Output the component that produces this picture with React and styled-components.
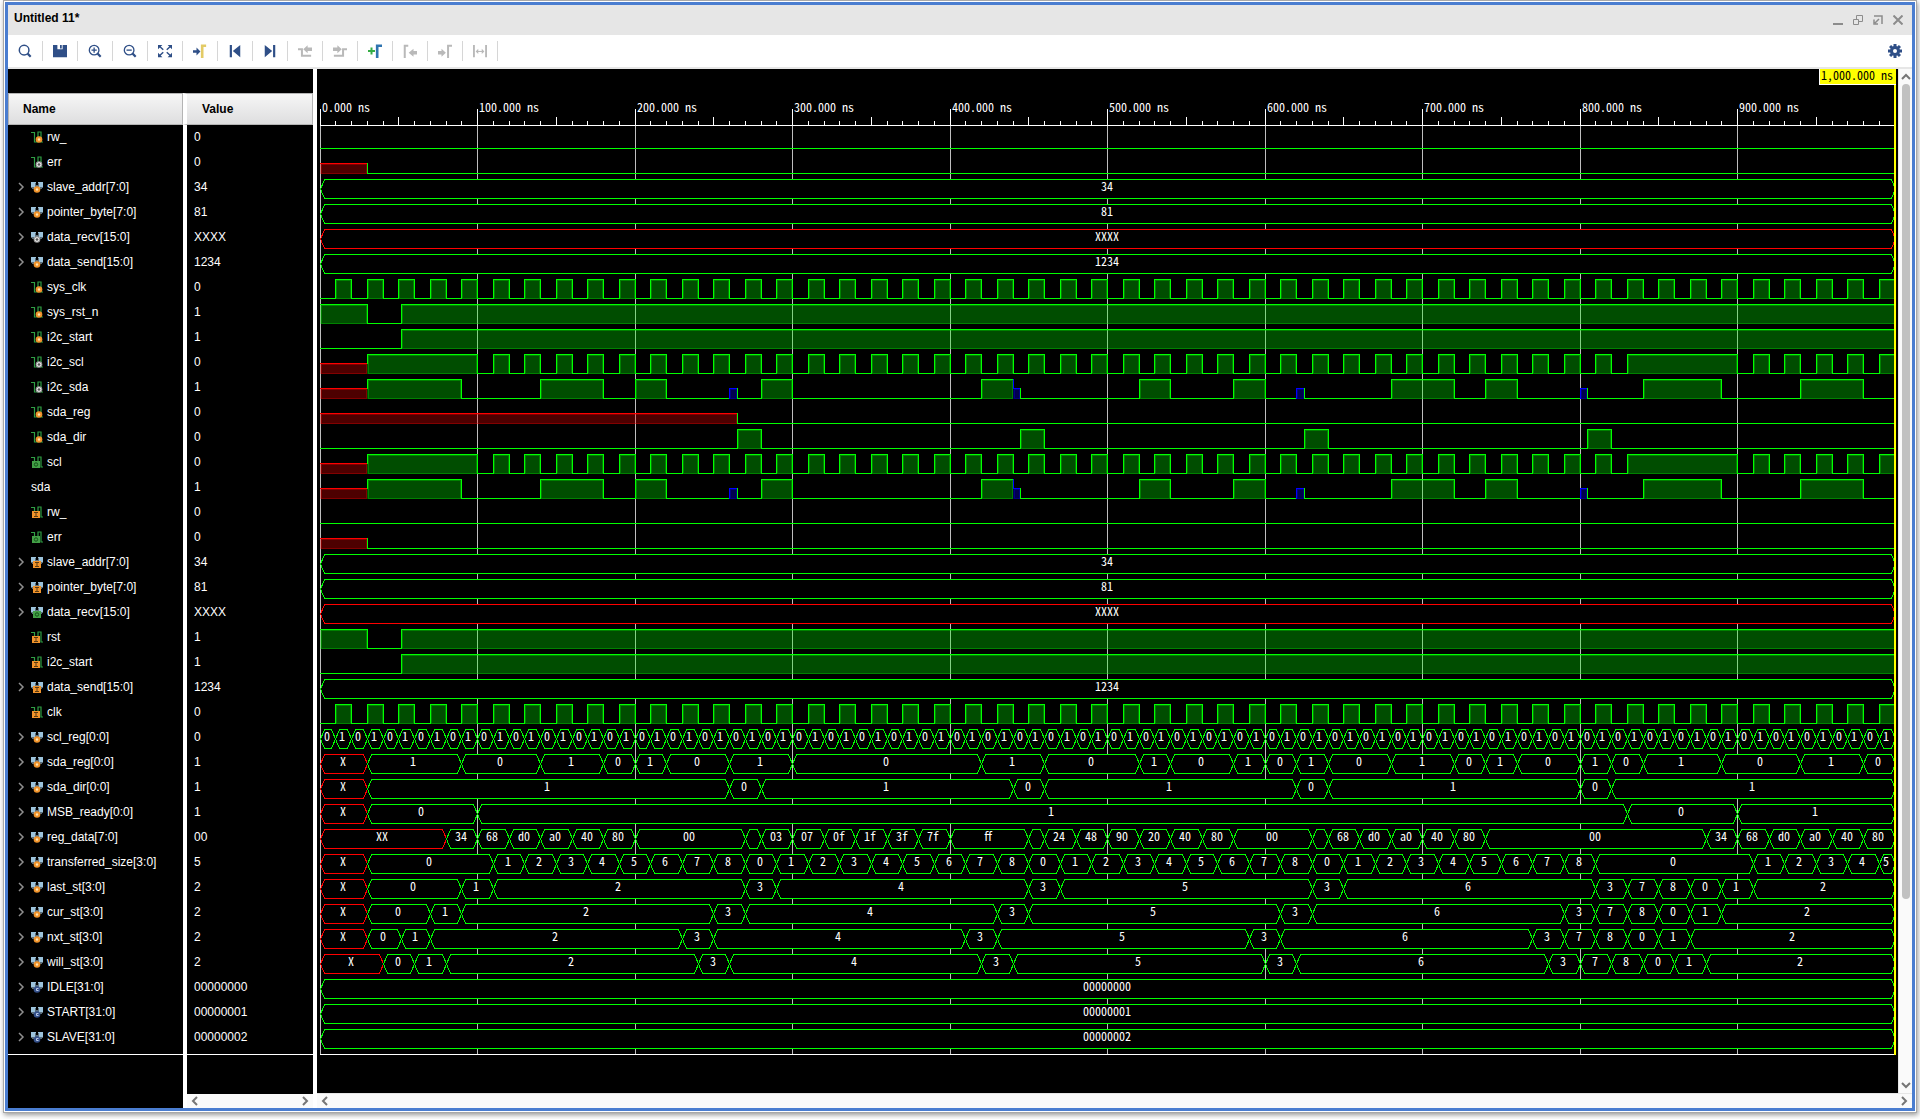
import React, { useLayoutEffect, useRef, useState } from 'react';
import styled, { createGlobalStyle } from 'styled-components';

const ROW = 25; // height of one signal row
const RULER = 56; // strip above the first row
const END = 1000; // simulated time in ns

const COLORS = {
    green: '#00ff00',
    red: '#ff0000',
    blue: '#0000ff',
    navy: '#2f4f87',
    grey: '#b9b9b9',
};

// levels: [end, level] pairs, level is 0, 1, 'x' or 'z'
const clock = [];
for (let t = 0; t < END; t += 20) {
    clock.push([t + 10, 0], [t + 20, 1]);
}

const scl = [
    [30, 'x'],
    [100, 1],
    ...clock.filter(([end]) => end > 100 && end <= 820),
    [830, 0],
    [900, 1],
    ...clock.filter(([end]) => end > 900),
];

const sda = [
    [30, 'x'], [90, 1], [140, 0], [180, 1], [200, 0], [220, 1], [260, 0], [265, 'z'],
    [280, 0], [300, 1], [420, 0], [440, 1], [445, 'z'], [520, 0], [540, 1], [580, 0],
    [600, 1], [620, 0], [625, 'z'], [680, 0], [720, 1], [740, 0], [760, 1], [800, 0],
    [805, 'z'], [840, 0], [890, 1], [940, 0], [980, 1], [1000, 0],
];

const sdaDir = [
    [265, 0], [280, 1], [445, 0], [460, 1], [625, 0], [640, 1], [805, 0], [820, 1], [1000, 0],
];

const errLevels = [[30, 'x'], [1000, 0]];
const resetLevels = [[30, 1], [52, 0], [1000, 1]];
const startLevels = [[52, 0], [1000, 1]];

// bus cells: [end, label]
const sclReg = [];
for (let t = 0; t < END; t += 10) {
    sclReg.push([t + 10, (t / 10) % 2 ? '1' : '0']);
}

const sdaReg = [
    [30, 'X'], [90, '1'], [140, '0'], [180, '1'], [200, '0'], [220, '1'], [260, '0'],
    [300, '1'], [420, '0'], [460, '1'], [520, '0'], [540, '1'], [580, '0'], [600, '1'],
    [620, '0'], [640, '1'], [680, '0'], [720, '1'], [740, '0'], [760, '1'], [800, '0'],
    [820, '1'], [840, '0'], [890, '1'], [940, '0'], [980, '1'], [1000, '0'],
];

const sdaDirReg = [
    [30, 'X'], [260, '1'], [280, '0'], [440, '1'], [460, '0'], [620, '1'], [640, '0'],
    [800, '1'], [820, '0'], [1000, '1'],
];

const regData = [
    [80, 'XX'], [100, '34'], [120, '68'], [140, 'd0'], [160, 'a0'], [180, '40'], [200, '80'],
    [270, '00'], [280, ''], [300, '03'], [320, '07'], [340, '0f'], [360, '1f'], [380, '3f'],
    [400, '7f'], [450, 'ff'], [460, ''], [480, '24'], [500, '48'], [520, '90'], [540, '20'],
    [560, '40'], [580, '80'], [630, '00'], [640, ''], [660, '68'], [680, 'd0'], [700, 'a0'],
    [720, '40'], [740, '80'], [880, '00'], [900, '34'], [920, '68'], [940, 'd0'], [960, 'a0'],
    [980, '40'], [1000, '80'],
];

const count = (start, from, to) => {
    const cells = [];
    for (let n = from; n <= to; n++) {
        cells.push([start + (n - from + 1) * 20, String(n)]);
    }
    return cells;
};

const transferred = [
    [30, 'X'], [110, '0'], ...count(110, 1, 8), ...count(270, 0, 8), ...count(450, 0, 8),
    ...count(630, 0, 8), [910, '0'], ...count(910, 1, 4), [1000, '5'],
];

// the four state registers run the same sequence, each a bit earlier or later
const states = (head, t) => [
    ...head,
    [t, '2'], [t + 20, '3'], [t + 180, '4'], [t + 200, '3'], [t + 360, '5'], [t + 380, '3'],
    [t + 540, '6'], [t + 560, '3'], [t + 580, '7'], [t + 600, '8'], [t + 620, '0'],
    [t + 640, '1'], [1000, '2'],
];

const SIGNALS = [
    { name: 'rw_', value: '0', icon: 'reg', levels: [[1000, 0]] },
    { name: 'err', value: '0', icon: 'wire', levels: errLevels },
    { name: 'slave_addr[7:0]', value: '34', icon: 'reg', bus: [[1000, '34']] },
    { name: 'pointer_byte[7:0]', value: '81', icon: 'reg', bus: [[1000, '81']] },
    { name: 'data_recv[15:0]', value: 'XXXX', icon: 'wire', bus: [[1000, 'XXXX']] },
    { name: 'data_send[15:0]', value: '1234', icon: 'reg', bus: [[1000, '1234']] },
    { name: 'sys_clk', value: '0', icon: 'reg', levels: clock },
    { name: 'sys_rst_n', value: '1', icon: 'reg', levels: resetLevels },
    { name: 'i2c_start', value: '1', icon: 'reg', levels: startLevels },
    { name: 'i2c_scl', value: '0', icon: 'wire', levels: scl },
    { name: 'i2c_sda', value: '1', icon: 'wire', levels: sda },
    { name: 'sda_reg', value: '0', icon: 'reg', levels: [[265, 'x'], [1000, 0]] },
    { name: 'sda_dir', value: '0', icon: 'reg', levels: sdaDir },
    { name: 'scl', value: '0', icon: 'out', levels: scl },
    { name: 'sda', value: '1', levels: sda },
    { name: 'rw_', value: '0', icon: 'in', levels: [[1000, 0]] },
    { name: 'err', value: '0', icon: 'out', levels: errLevels },
    { name: 'slave_addr[7:0]', value: '34', icon: 'in', bus: [[1000, '34']] },
    { name: 'pointer_byte[7:0]', value: '81', icon: 'in', bus: [[1000, '81']] },
    { name: 'data_recv[15:0]', value: 'XXXX', icon: 'out', bus: [[1000, 'XXXX']] },
    { name: 'rst', value: '1', icon: 'in', levels: resetLevels },
    { name: 'i2c_start', value: '1', icon: 'in', levels: startLevels },
    { name: 'data_send[15:0]', value: '1234', icon: 'in', bus: [[1000, '1234']] },
    { name: 'clk', value: '0', icon: 'in', levels: clock },
    { name: 'scl_reg[0:0]', value: '0', icon: 'reg', bus: sclReg },
    { name: 'sda_reg[0:0]', value: '1', icon: 'reg', bus: sdaReg },
    { name: 'sda_dir[0:0]', value: '1', icon: 'reg', bus: sdaDirReg },
    {
        name: 'MSB_ready[0:0]',
        value: '1',
        icon: 'reg',
        bus: [[30, 'X'], [100, '0'], [830, '1'], [900, '0'], [1000, '1']],
    },
    { name: 'reg_data[7:0]', value: '00', icon: 'reg', bus: regData },
    { name: 'transferred_size[3:0]', value: '5', icon: 'reg', bus: transferred },
    {
        name: 'last_st[3:0]',
        value: '2',
        icon: 'reg',
        bus: states([[30, 'X'], [90, '0'], [110, '1']], 270),
    },
    {
        name: 'cur_st[3:0]',
        value: '2',
        icon: 'reg',
        bus: states([[30, 'X'], [70, '0'], [90, '1']], 250),
    },
    {
        name: 'nxt_st[3:0]',
        value: '2',
        icon: 'reg',
        bus: states([[30, 'X'], [52, '0'], [70, '1']], 230),
    },
    {
        name: 'will_st[3:0]',
        value: '2',
        icon: 'reg',
        bus: states([[40, 'X'], [60, '0'], [80, '1']], 240),
    },
    { name: 'IDLE[31:0]', value: '00000000', icon: 'const', bus: [[1000, '00000000']] },
    { name: 'START[31:0]', value: '00000001', icon: 'const', bus: [[1000, '00000001']] },
    { name: 'SLAVE[31:0]', value: '00000002', icon: 'const', bus: [[1000, '00000002']] },
];

const BADGES = {
    reg: { fill: '#f0932b', mark: '#ffe2b0', round: true },
    wire: { fill: '#9a9a9a', mark: '#f4f4f4', round: true },
    const: { fill: '#34508a', mark: '#b9c8e6', round: true },
    in: { fill: '#f0932b', mark: '#5b3a10' },
    out: { fill: '#43a047', mark: '#155218' },
};

function SignalIcon({ kind, bus }) {
    const badge = BADGES[kind];
    const cx = bus ? 6 : badge.round ? 8 : 5;

    return (
        <svg width="12" height="12" viewBox="0 0 12 12" aria-hidden="true">
            {bus ? (
                <>
                    <path d="M0 1h5v7H2V7H0zM12 1H7v7h3V7h2z" fill="#9cc3dc" />
                    <path d="M0 6h3v2H1V7H0zM12 6H9v2h2V7h1zM4 2h1v2h2V2h1v4H4z" fill="#5c6f7c" />
                </>
            ) : (
                <path
                    d="M0 1.500h3.500v9.500H7V1h3v10h2"
                    fill="none"
                    stroke="#2f9e44"
                    strokeWidth="1.200"
                />
            )}
            {badge.round ? (
                <>
                    <circle cx={cx} cy="8.500" r="3.300" fill={badge.fill} />
                    {kind === 'reg' && <circle cx={cx} cy="8.500" r="1.200" fill={badge.mark} />}
                    {kind === 'wire' && (
                        <circle cx={cx} cy="8.500" r="1.800" fill="#555" stroke={badge.mark} />
                    )}
                    {kind === 'const' && (
                        <path d="M7.500 7.500H5.500v2h2" fill="none" stroke={badge.mark} />
                    )}
                </>
            ) : (
                <>
                    <rect x={cx - 4} y="5" width="8" height="7" fill={badge.fill} />
                    {kind === 'in' ? (
                        <path
                            d={`M${cx - 2} 6.500h4M${cx} 6v5M${cx - 2} 10.500h4`}
                            stroke={badge.mark}
                        />
                    ) : (
                        <circle cx={cx} cy="8.500" r="1.700" fill="none" stroke={badge.mark} />
                    )}
                </>
            )}
        </svg>
    );
}

const { navy, grey } = COLORS;

const TOOLS = [
    {
        label: 'Search',
        art: (
            <>
                <circle cx="7" cy="7" r="5.500" fill="none" stroke={navy} strokeWidth="1.700" />
                <path d="M11 11l3.500 3.500" stroke={navy} strokeWidth="2.500" />
            </>
        ),
    },
    { label: 'Save', art: <path d="M0 1h5v5h6V1h5v14H0zM8 1h2v4H8z" fill={navy} /> },
    {
        label: 'Zoom in',
        art: (
            <>
                <circle cx="7" cy="7" r="5.500" fill="none" stroke={navy} strokeWidth="1.500" />
                <path d="M11 11l3.500 3.500" stroke={navy} strokeWidth="2.500" />
                <path d="M4 7h6M7 4v6" stroke={navy} strokeWidth="1.500" />
            </>
        ),
    },
    {
        label: 'Zoom out',
        art: (
            <>
                <circle cx="7" cy="7" r="5.500" fill="none" stroke={navy} strokeWidth="1.500" />
                <path d="M11 11l3.500 3.500" stroke={navy} strokeWidth="2.500" />
                <path d="M4 7h6" stroke={navy} strokeWidth="1.500" />
            </>
        ),
    },
    {
        label: 'Zoom fit',
        art: (
            <>
                <path d="M0 1h5L0 6zM16 1v5l-5-5zM0 15v-5l5 5zM16 15h-5l5-5z" fill={navy} />
                <path
                    d="M1 2l5 4.500M15 2l-5 4.500M1 14l5-4.500M15 14l-5-4.500"
                    stroke={navy}
                    strokeWidth="1.700"
                />
            </>
        ),
    },
    {
        label: 'Go to cursor',
        art: (
            <>
                <path d="M0 7h4V4l4.500 4.500L4 13v-3H0z" fill={navy} />
                <path d="M10.500 16V2H15" fill="none" stroke="#e3cb66" strokeWidth="3" />
            </>
        ),
    },
    {
        label: 'Go to time 0',
        art: <path d="M2 1h2.500v14H2zM14 1v14L5.500 8z" fill={navy} />,
    },
    {
        label: 'Go to last time',
        art: <path d="M11.500 1H14v14h-2.500zM2 1v14l8.500-7z" fill={navy} />,
    },
    {
        label: 'Previous transition',
        disabled: true,
        art: (
            <>
                <path d="M0 6h4.500v7.500H15" fill="none" stroke={grey} strokeWidth="2.300" />
                <path d="M16 4v4h-5v2.500L6 6l5-4.500V4z" fill={grey} />
            </>
        ),
    },
    {
        label: 'Next transition',
        disabled: true,
        art: (
            <>
                <path d="M16 6h-4.500v7.500H1" fill="none" stroke={grey} strokeWidth="2.300" />
                <path d="M0 4v4h5v2.500L10 6 5 1.500V4z" fill={grey} />
            </>
        ),
    },
    {
        label: 'Add marker',
        art: (
            <>
                <path d="M0 8h8M4 4v8" stroke="#35ad45" strokeWidth="2.300" />
                <path d="M10.500 16V2H16" fill="none" stroke="#2f74b0" strokeWidth="3" />
            </>
        ),
    },
    {
        label: 'Previous marker',
        disabled: true,
        art: (
            <>
                <path d="M2 16V2h4" fill="none" stroke={grey} strokeWidth="2.300" />
                <path d="M16 8v4h-4v2.500L6.500 10 12 5.500V8z" fill={grey} />
            </>
        ),
    },
    {
        label: 'Next marker',
        disabled: true,
        art: (
            <>
                <path d="M0 8v4h4v2.500L9 10 4 5.500V8z" fill={grey} />
                <path d="M11.500 16V2H16" fill="none" stroke={grey} strokeWidth="2.300" />
            </>
        ),
    },
    {
        label: 'Swap cursors',
        disabled: true,
        art: (
            <>
                <path d="M1 1v14M15 1v14" stroke={grey} strokeWidth="2.300" />
                <path d="M4 8.500h8" stroke={grey} strokeWidth="1.200" />
                <path d="M3 8.500L6 5.500v6zM13 8.500l-3-3v6z" fill={grey} />
            </>
        ),
    },
];

const WINDOW_TOOLS = [
    { label: 'Minimize', art: <path d="M0 9h10" strokeWidth="2" /> },
    { label: 'Restore', art: <path d="M0.500 4.500h5v5h-5zM3.500 4V0.500h6v6H6" /> },
    { label: 'Float', art: <path d="M1 1h8v8M2 8l4-4M1 4.500V9h4" strokeWidth="1.500" /> },
    { label: 'Close', art: <path d="M0.500 0.500l9 9M9.500 0.500l-9 9" strokeWidth="2" /> },
];

const ARROWS = {
    up: 'M2 8l4-4 4 4',
    down: 'M2 4l4 4 4-4',
    left: 'M8 2L4 6l4 4',
    right: 'M4 2l4 4-4 4',
};

function Arrow({ dir }) {
    return (
        <ArrowButton type="button" aria-label={`Scroll ${dir}`}>
            <svg width="12" height="12" viewBox="0 0 12 12" fill="none">
                <path d={ARROWS[dir]} stroke="#757575" strokeWidth="2" />
            </svg>
        </ArrowButton>
    );
}

// One-bit signal. Baseline at 23, high level at 4, unknown and floating at 13.
function Levels({ levels, at }) {
    const tops = { 0: 23, 1: 4, x: 13, z: 13 };
    const tones = { 0: COLORS.green, 1: COLORS.green, x: COLORS.red, z: COLORS.blue };

    return levels.map(([end, level], i) => {
        const start = i ? levels[i - 1][0] : 0;
        const before = i ? tops[levels[i - 1][1]] : null;
        const x = at(start);
        const w = at(end) - x;
        const top = tops[level];
        const tone = tones[level];

        return (
            <g key={end} fill={tone}>
                {level !== 0 && (
                    <>
                        <rect x={x} y={top} width={w} height={24 - top} fillOpacity="0.3" />
                        <path
                            d={`M${x + 1.5} ${top + 1.5}H${x + w - 0.5}V23.500H${x + 1.5}z`}
                            fill="none"
                            stroke={tone}
                            strokeOpacity="0.3"
                        />
                    </>
                )}
                <rect x={x} y={top} width={w + 1} height="1" />
                {before !== null && (
                    <rect
                        x={x}
                        y={Math.min(before, top)}
                        width="1"
                        height={Math.abs(before - top) + 1}
                    />
                )}
            </g>
        );
    });
}

function Bus({ cells, at }) {
    return cells.map(([end, label], i) => {
        const a = at(i ? cells[i - 1][0] : 0) + 0.5;
        const b = at(end) + 0.5;
        const unknown = label.startsWith('X');

        return (
            <g key={end}>
                <polygon
                    points={`${a},14 ${a + 4},4.5 ${b - 4},4.5 ${b},14 ${b - 4},23.5 ${a + 4},23.5`}
                    fill="#000"
                    stroke={unknown ? COLORS.red : COLORS.green}
                />
                <WaveText x={Math.floor((a + b) / 2) - 1} y="16" textAnchor="middle">
                    {label}
                </WaveText>
            </g>
        );
    });
}

function Waveform() {
    const box = useRef(null);
    const [width, setWidth] = useState(0);

    useLayoutEffect(() => {
        const measure = () => setWidth(box.current.clientWidth);
        measure();
        const observer = new ResizeObserver(measure);
        observer.observe(box.current);
        return () => observer.disconnect();
    }, []);

    const at = (t) => 3 + Math.floor((t * Math.max(width - 6, 0)) / END);
    const bottom = RULER + SIGNALS.length * ROW + 4;
    const ticks = [];
    for (let t = 0; t < END; t += 10) {
        ticks.push(t);
    }

    return (
        <Canvas ref={box}>
            {width > 0 && (
                <svg
                    width={width}
                    height={bottom + 1}
                    overflow="visible"
                    role="img"
                    aria-label="Waveforms"
                >
                    <g fill="#fff" shapeRendering="crispEdges">
                        {ticks.map((t) => {
                            const h = t % 100 === 0 ? 16 : t % 50 === 0 ? 8 : 4;
                            return <rect key={t} x={at(t)} y={RULER - h} width="1" height={h} />;
                        })}
                        <rect x={at(0)} y={RULER} width={at(END) - at(0)} height="1" />
                        <rect x={at(0)} y={bottom} width={at(END) - at(0)} height="1" />
                    </g>
                    {ticks
                        .filter((t) => t % 100 === 0)
                        .map((t) => (
                            <g key={t}>
                                <rect
                                    x={at(t)}
                                    y={RULER + 1}
                                    width="1"
                                    height={bottom - RULER - 1}
                                    fill="#bebebe"
                                />
                                <WaveText x={at(t) + 2} y="43">
                                    {t}.000 ns
                                </WaveText>
                            </g>
                        ))}
                    {SIGNALS.map((signal, i) => (
                        <g
                            key={i}
                            transform={`translate(0 ${RULER + i * ROW})`}
                            shapeRendering="crispEdges"
                        >
                            {signal.bus ? (
                                <Bus cells={signal.bus} at={at} />
                            ) : (
                                <Levels levels={signal.levels} at={at} />
                            )}
                        </g>
                    ))}
                    <rect x={at(END) - 1} y="16" width="2" height={bottom - 15} fill="#ff0" />
                    <rect x={at(END) - 76} y="0" width="77" height="16" fill="#fff" />
                    <rect x={at(END) - 75} y="0" width="76" height="15" fill="#ff0" />
                    <CursorText x={at(END) - 74} y="11">
                        1,000.000 ns
                    </CursorText>
                </svg>
            )}
        </Canvas>
    );
}

function App() {
    return (
        <>
            <GlobalStyle />
            <Frame>
                <Panel>
                    <TitleBar>
                        <Title>Untitled 11*</Title>
                        <WindowTools>
                            {WINDOW_TOOLS.map((tool) => (
                                <WindowButton key={tool.label} type="button" aria-label={tool.label}>
                                    <svg width="10" height="10" viewBox="0 0 10 10" fill="none" stroke="#8c8c8c">
                                        {tool.art}
                                    </svg>
                                </WindowButton>
                            ))}
                        </WindowTools>
                    </TitleBar>
                    <Toolbar>
                        {TOOLS.map((tool) => (
                            <ToolSlot key={tool.label}>
                                <ToolButton type="button" aria-label={tool.label} disabled={tool.disabled}>
                                    <svg width="14" height="14" viewBox="0 0 16 16">
                                        {tool.art}
                                    </svg>
                                </ToolButton>
                            </ToolSlot>
                        ))}
                        <Spacer />
                        <ToolButton type="button" aria-label="Settings">
                            <svg width="14" height="14" viewBox="0 0 14 14">
                                {[0, 45, 90, 135].map((turn) => (
                                    <rect
                                        key={turn}
                                        x="5.500"
                                        width="3"
                                        height="14"
                                        fill={navy}
                                        transform={`rotate(${turn} 7 7)`}
                                    />
                                ))}
                                <circle cx="7" cy="7" r="5" fill={navy} />
                                <circle cx="7" cy="7" r="2" fill="#fff" />
                            </svg>
                        </ToolButton>
                    </Toolbar>
                    <Panes>
                        <Signals>
                            <Strip />
                            <Table>
                                <thead>
                                    <tr>
                                        <NameHead>Name</NameHead>
                                        <ValueHead>Value</ValueHead>
                                    </tr>
                                </thead>
                                <tbody>
                                    {SIGNALS.map((signal, i) => (
                                        <tr key={i}>
                                            <NameCell>
                                                <Name>
                                                    {signal.bus ? (
                                                        <Expand type="button" aria-label="Expand">
                                                            <svg width="8" height="10" viewBox="0 0 8 10" fill="none">
                                                                <path d="M2 1l4 4-4 4" stroke="#8f8f8f" strokeWidth="1.500" />
                                                            </svg>
                                                        </Expand>
                                                    ) : (
                                                        <Indent />
                                                    )}
                                                    {signal.icon && (
                                                        <SignalIcon kind={signal.icon} bus={!!signal.bus} />
                                                    )}
                                                    <span>{signal.name}</span>
                                                </Name>
                                            </NameCell>
                                            <ValueCell>{signal.value}</ValueCell>
                                        </tr>
                                    ))}
                                </tbody>
                            </Table>
                            <Rest>
                                <Filler>
                                    <Rule />
                                </Filler>
                                <Filler>
                                    <Rule />
                                    <ValueScroll>
                                        <Arrow dir="left" />
                                        <Arrow dir="right" />
                                    </ValueScroll>
                                </Filler>
                            </Rest>
                        </Signals>
                        <Waves>
                            <WaveRow>
                                <Waveform />
                                <VerticalScroll>
                                    <Arrow dir="up" />
                                    <Track>
                                        <Thumb />
                                    </Track>
                                    <Arrow dir="down" />
                                </VerticalScroll>
                            </WaveRow>
                            <WaveScroll>
                                <Arrow dir="left" />
                                <Arrow dir="right" />
                            </WaveScroll>
                        </Waves>
                    </Panes>
                </Panel>
            </Frame>
        </>
    );
}

const GlobalStyle = createGlobalStyle`
    * {
        box-sizing: border-box;
    }
    body {
        margin: 0;
        background: #fff;
        font-family: 'Liberation Sans', Arial, sans-serif;
        font-size: 12px;
    }
    button {
        padding: 0;
        border: 0;
        background: none;
    }
    svg {
        display: block;
        flex: none;
    }
`;

const Frame = styled.main`
    height: 100vh;
    padding: 2px 5px 8px;
`;

const Panel = styled.section`
    display: flex;
    flex-direction: column;
    height: 100%;
    border: 3px solid #4a7dd0;
    outline: 1px solid #fff;
    box-shadow: 0 0 0 2px #a8a8a8, 1px 2px 5px 2px #999;
`;

const TitleBar = styled.header`
    display: flex;
    align-items: center;
    justify-content: space-between;
    flex: none;
    height: 30px;
    padding: 0 9px 0 6px;
    background: #e6e6e6;
`;

const Title = styled.h1`
    margin: 0 0 4px;
    font-size: 12px;
    line-height: 16px;
    color: #000;
`;

const WindowTools = styled.div`
    display: flex;
    gap: 10px;
`;

const WindowButton = styled.button`
    width: 10px;
    height: 10px;
`;

const Toolbar = styled.div`
    display: flex;
    align-items: center;
    flex: none;
    height: 34px;
    border-bottom: 2px solid #e6e6e6;
    background: #fff;
`;

const ToolSlot = styled.div`
    border-right: 1px solid #d6d6d6;
`;

const ToolButton = styled.button`
    display: flex;
    align-items: center;
    justify-content: center;
    width: 34px;
    height: 20px;
`;

const Spacer = styled.div`
    flex: 1;
`;

const Panes = styled.div`
    display: flex;
    flex: 1;
    gap: 4px;
    min-height: 0;
`;

const Signals = styled.div`
    display: flex;
    flex-direction: column;
    flex: none;
    width: 305px;
    color: #fff;
`;

const Strip = styled.div`
    height: 24px;
    background: #000;
`;

const Table = styled.table`
    width: 100%;
    table-layout: fixed;
    border-collapse: separate;
    border-spacing: 0;
    text-align: left;
`;

const Head = styled.th`
    height: 32px;
    padding: 0 0 0 14px;
    border: 1px solid #b4b4b4;
    background: linear-gradient(#f6f6f6, #dededf);
    background-clip: padding-box;
    color: #000;
    font-weight: bold;
`;

const NameHead = styled(Head)`
    width: 175px;
`;

const ValueHead = styled(Head)`
    padding-left: 15px;
    border-left: 4px solid #fff;
`;

const Cell = styled.td`
    height: ${ROW}px;
    padding: 0 0 1px;
    background: #000;
    line-height: 16px;
    white-space: nowrap;
`;

const NameCell = styled(Cell)`
    overflow: hidden;
`;

const ValueCell = styled(Cell)`
    padding-left: 7px;
    border-left: 4px solid #fff;
`;

const Name = styled.div`
    display: flex;
    align-items: center;
    gap: 4px;
    padding-left: 9px;
`;

const Expand = styled.button`
    width: 10px;
`;

const Indent = styled.span`
    width: 10px;
`;

const Rest = styled.div`
    display: grid;
    grid-template-columns: 175px 1fr;
    gap: 4px;
    flex: 1;
`;

const Filler = styled.div`
    display: flex;
    flex-direction: column;
    justify-content: space-between;
    padding-top: 4px;
    background: #000;
`;

const Rule = styled.div`
    height: 1px;
    background: #fff;
`;

const Waves = styled.div`
    display: flex;
    flex-direction: column;
    flex: 1;
    min-width: 0;
`;

const WaveRow = styled.div`
    display: flex;
    flex: 1;
    min-height: 0;
`;

const Canvas = styled.div`
    flex: 1;
    min-width: 0;
    background: #000;
`;

const WaveText = styled.text`
    fill: #fff;
    font-family: 'Noto Sans CJK SC', 'Liberation Mono', monospace;
    font-feature-settings: 'hwid';
    font-size: 12px;
`;

const CursorText = styled(WaveText)`
    fill: #000;
`;

const ArrowButton = styled.button`
    display: flex;
    align-items: center;
    justify-content: center;
    width: 14px;
    height: 14px;
`;

const HorizontalScroll = styled.div`
    display: flex;
    align-items: center;
    justify-content: space-between;
    padding: 0 1px;
    background: #fafafa;
`;

const ValueScroll = styled(HorizontalScroll)`
    height: 14px;
`;

const WaveScroll = styled(HorizontalScroll)`
    height: 15px;
    border-top: 1px solid #e6e6e6;
`;

const VerticalScroll = styled.div`
    display: flex;
    flex-direction: column;
    align-items: center;
    width: 14px;
    padding: 1px 0;
    border-left: 1px solid #e6e6e6;
    background: #fafafa;
`;

const Track = styled.div`
    flex: 1;
    width: 8px;
`;

const Thumb = styled.div`
    height: 82%;
    border-radius: 4px;
    background: #c1c1c1;
`;

export default App;
